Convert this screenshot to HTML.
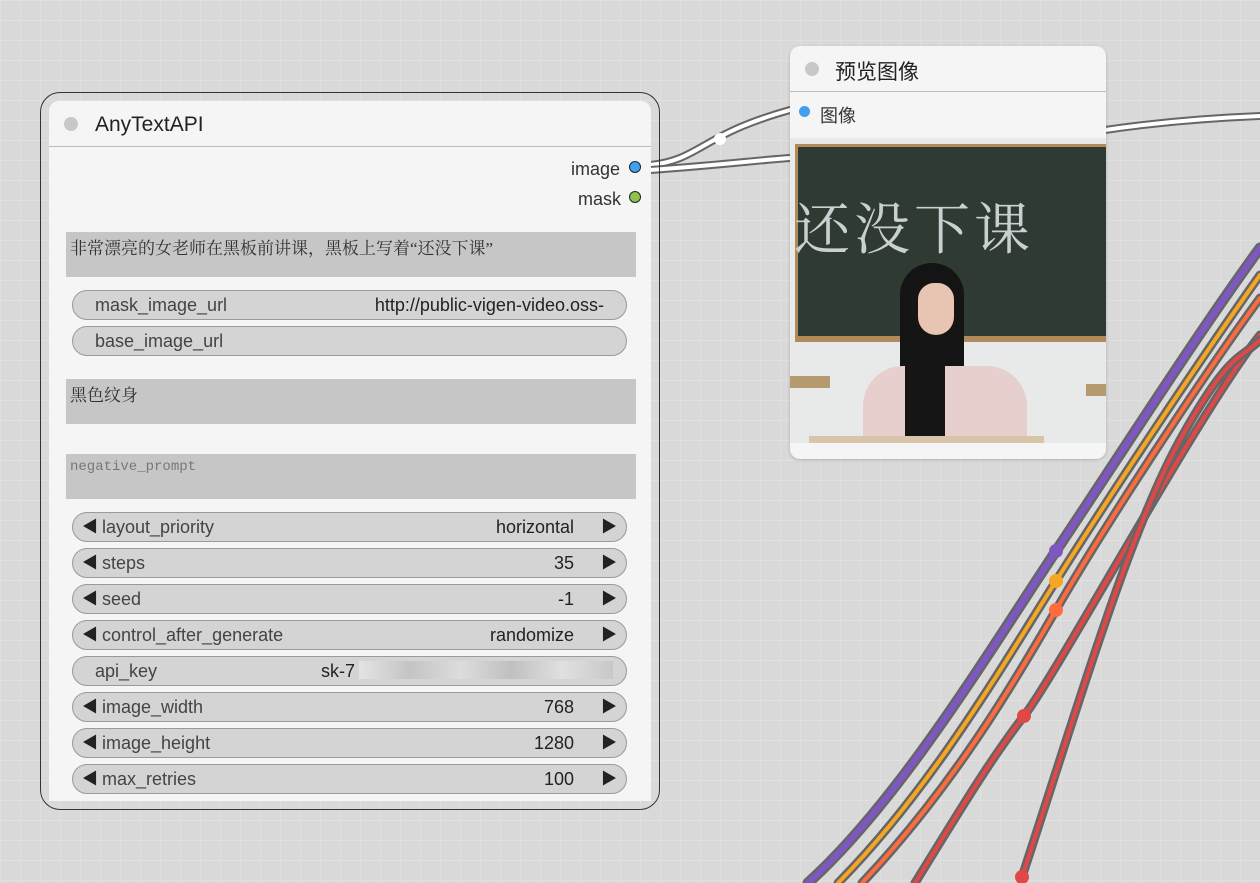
<!DOCTYPE html>
<html><head><meta charset="utf-8"><style>
body{margin:0;width:1260px;height:883px;overflow:hidden;position:relative;background-color:#d9d9d9;
background-image:linear-gradient(#e0e0e0 1px,transparent 1px),linear-gradient(90deg,#e0e0e0 1px,transparent 1px);background-size:20px 20px;font-family:"Liberation Sans","Noto Sans CJK SC",sans-serif;}
.abs{position:absolute}
.w{position:absolute;left:72px;width:553px;height:28px;border:1px solid #9a9a9a;border-radius:15px;background:#d4d4d4;font-size:18px;color:#444;line-height:29px}
.w .l{position:absolute;left:29px}
.w .v{position:absolute;right:52px;color:#222}
.w .a{position:absolute;left:9px;font-size:16px;color:#222}
.w .b{position:absolute;right:9px;font-size:16px;color:#222}
.ta{position:absolute;left:66px;width:570px;height:45px;background:#c6c6c6;font-family:"Liberation Serif","Noto Serif CJK SC",serif;font-size:17px;color:#333;padding:2px 4px;box-sizing:border-box}
</style></head><body>
<svg class="abs" style="left:0;top:0" width="1260" height="883">
<g fill="none" stroke-linecap="round">
<path d="M650 165 C700 160 700 135 790 110" stroke="#666" stroke-width="8"/>
<path d="M650 165 C700 160 700 135 790 110" stroke="#fff" stroke-width="4"/>
<path d="M650 170 C720 165 760 160 790 158" stroke="#666" stroke-width="8"/>
<path d="M650 170 C720 165 760 160 790 158" stroke="#fff" stroke-width="4"/>
<path d="M1105 130 C1160 122 1210 118 1260 116" stroke="#666" stroke-width="8"/>
<path d="M1105 130 C1160 122 1210 118 1260 116" stroke="#fff" stroke-width="4"/>
<path d="M808 883 C900 800 990 650 1056 551 S1200 330 1260 248" stroke="#666" stroke-width="11"/>
<path d="M808 883 C900 800 990 650 1056 551 S1200 330 1260 248" stroke="#7e57c2" stroke-width="6"/>
<path d="M838 883 C930 790 1000 670 1056 581 S1200 360 1260 275" stroke="#666" stroke-width="9"/>
<path d="M838 883 C930 790 1000 670 1056 581 S1200 360 1260 275" stroke="#f5a623" stroke-width="4"/>
<path d="M862 883 C950 790 1010 690 1056 610 S1200 380 1260 298" stroke="#666" stroke-width="9"/>
<path d="M862 883 C950 790 1010 690 1056 610 S1200 380 1260 298" stroke="#ff6b3d" stroke-width="4"/>
<path d="M915 883 C960 810 990 760 1024 716 S1200 410 1260 335" stroke="#666" stroke-width="9"/>
<path d="M915 883 C960 810 990 760 1024 716 S1200 410 1260 335" stroke="#e04848" stroke-width="4"/>
<path d="M1022 877 C1080 700 1130 530 1180 440 S1240 360 1260 340" stroke="#666" stroke-width="9"/>
<path d="M1022 877 C1080 700 1130 530 1180 440 S1240 360 1260 340" stroke="#e04848" stroke-width="4"/>
</g>
<circle cx="720" cy="139" r="6" fill="#fff"/>
<circle cx="1056" cy="551" r="7" fill="#7e57c2"/>
<circle cx="1056" cy="581" r="7" fill="#f5a623"/>
<circle cx="1056" cy="610" r="7" fill="#ff6b3d"/>
<circle cx="1024" cy="716" r="7" fill="#e04848"/>
<circle cx="1022" cy="877" r="7" fill="#e04848"/>
</svg>

<div class="abs" style="left:40px;top:92px;width:620px;height:718px;border:1.5px solid #333;border-radius:20px;box-sizing:border-box"></div>
<div class="abs" style="left:49px;top:101px;width:602px;height:700px;background:#f5f5f5;border-radius:10px 10px 0 0"></div>
<div class="abs" style="left:49px;top:146px;width:602px;height:1px;background:#bbb"></div>
<div class="abs" style="left:64px;top:117px;width:14px;height:14px;border-radius:50%;background:#c8c8c8"></div>
<div class="abs" style="left:95px;top:113px;font-size:21px;color:#222">AnyTextAPI</div>
<div class="abs" style="left:571px;top:159px;font-size:18px;color:#333">image</div>
<div class="abs" style="left:629px;top:161px;width:10px;height:10px;border-radius:50%;background:#3fa0f0;border:1.5px solid #222"></div>
<div class="abs" style="left:578px;top:189px;font-size:18px;color:#333">mask</div>
<div class="abs" style="left:629px;top:191px;width:10px;height:10px;border-radius:50%;background:#8dc24e;border:1.5px solid #222"></div>

<div class="ta" style="top:232px">非常漂亮的女老师在黑板前讲课，黑板上写着“还没下课”</div>
<div class="w" style="top:290px"><span class="l" style="left:22px">mask_image_url</span><span class="v" style="right:22px">http://public-vigen-video.oss-</span></div>
<div class="w" style="top:326px"><span class="l" style="left:22px">base_image_url</span></div>
<div class="ta" style="top:379px">黑色纹身</div>
<div class="ta" style="top:454px;font-family:'Liberation Mono',monospace;font-size:14px;color:#777;padding-top:5px">negative_prompt</div>

<div class="w" style="top:512px"><span class="a">◀</span><span class="l">layout_priority</span><span class="v">horizontal</span><span class="b">▶</span></div>
<div class="w" style="top:548px"><span class="a">◀</span><span class="l">steps</span><span class="v">35</span><span class="b">▶</span></div>
<div class="w" style="top:584px"><span class="a">◀</span><span class="l">seed</span><span class="v">-1</span><span class="b">▶</span></div>
<div class="w" style="top:620px"><span class="a">◀</span><span class="l">control_after_generate</span><span class="v">randomize</span><span class="b">▶</span></div>
<div class="w" style="top:656px"><span class="l" style="left:22px">api_key</span><span class="v" style="left:248px;right:auto">sk-7</span><div class="abs" style="left:286px;top:4px;width:254px;height:18px;background:linear-gradient(90deg,#e4e4e4,#c4c4c4 20%,#dcdcdc 40%,#c0c0c0 60%,#e0e0e0 80%,#c8c8c8)"></div></div>
<div class="w" style="top:692px"><span class="a">◀</span><span class="l">image_width</span><span class="v">768</span><span class="b">▶</span></div>
<div class="w" style="top:728px"><span class="a">◀</span><span class="l">image_height</span><span class="v">1280</span><span class="b">▶</span></div>
<div class="w" style="top:764px"><span class="a">◀</span><span class="l">max_retries</span><span class="v">100</span><span class="b">▶</span></div>

<div class="abs" style="left:790px;top:46px;width:316px;height:413px;background:#f5f5f5;border-radius:10px;box-shadow:0 1px 3px rgba(0,0,0,.2)"></div>
<div class="abs" style="left:790px;top:91px;width:316px;height:1px;background:#bbb"></div>
<div class="abs" style="left:805px;top:62px;width:14px;height:14px;border-radius:50%;background:#c8c8c8"></div>
<div class="abs" style="left:835px;top:56px;font-size:21px;color:#222">预览图像</div>
<div class="abs" style="left:799px;top:106px;width:11px;height:11px;border-radius:50%;background:#3fa0f0"></div>
<div class="abs" style="left:820px;top:102px;font-size:18px;color:#333">图像</div>
<div class="abs" style="left:790px;top:138px;width:316px;height:305px;background:#e8eaea;overflow:hidden">
 <div class="abs" style="left:5px;top:6px;width:320px;height:198px;background:#b08a58"></div>
 <div class="abs" style="left:8px;top:9px;width:320px;height:189px;background:#2f3a33"></div>
 <div class="abs" style="left:4px;top:48px;font-family:'Noto Serif CJK SC',serif;font-size:56px;color:#c8d0d0;letter-spacing:4px;white-space:nowrap">还没下课</div>
 <div class="abs" style="left:0;top:238px;width:40px;height:12px;background:#b59a70"></div>
 <div class="abs" style="left:296px;top:246px;width:20px;height:12px;background:#b59a70"></div>
 <div class="abs" style="left:110px;top:125px;width:64px;height:175px;background:#141414;border-radius:32px 32px 0 0"></div>
 <div class="abs" style="left:73px;top:228px;width:164px;height:80px;background:#e6cfcc;border-radius:40px 40px 0 0"></div>
 <div class="abs" style="left:115px;top:150px;width:40px;height:150px;background:#151515"></div>
 <div class="abs" style="left:128px;top:145px;width:36px;height:52px;background:#e7c5b2;border-radius:18px 18px 20px 20px"></div>
 <div class="abs" style="left:19px;top:298px;width:235px;height:10px;background:#d8c4a8"></div>
</div>
</body></html>
